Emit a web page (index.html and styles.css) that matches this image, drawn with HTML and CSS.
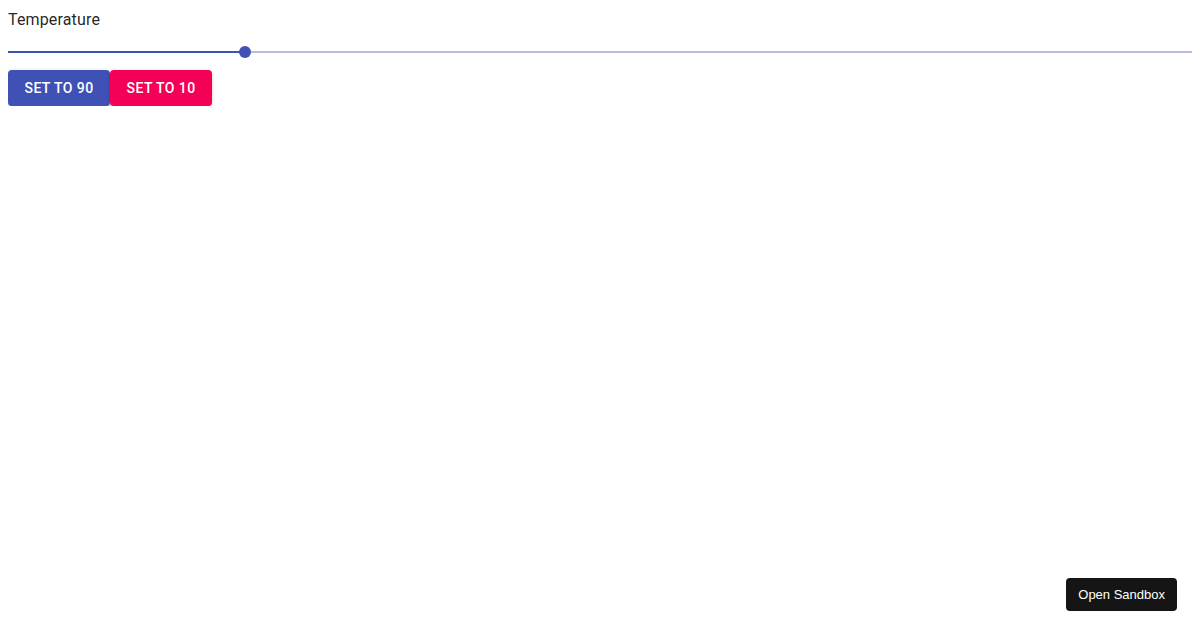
FILE: index.html
```html
<!DOCTYPE html>
<html lang="en">
<head>
    <meta charset="UTF-8">
    <meta name="viewport" content="width=device-width, initial-scale=1.0">
    <title>Slider</title>
    <link rel="stylesheet" href="styles.css">
</head>
<body>
    <p class="label">Temperature</p>
    <div class="slider">
        <span class="rail"></span>
        <span class="track" style="width: 20%"></span>
        <span class="thumb" style="left: 20%"></span>
    </div>
    <div class="actions">
        <button class="btn primary">Set to 90</button>
        <button class="btn secondary">Set to 10</button>
    </div>
    <a class="sandbox" href="#">Open Sandbox</a>
</body>
</html>
```

FILE: styles.css
```css
body {
    margin: 8px;
    font-family: Roboto, "Liberation Sans", sans-serif;
    color: rgba(0, 0, 0, 0.87);
    background: #fff;
}
.label {
    margin: 0 0 0.35em;
    font-size: 16px;
    line-height: 1.5;
    letter-spacing: 0.00938em;
}
.slider {
    position: relative;
    height: 2px;
    padding: 13px 0;
}
.rail {
    display: block;
    height: 2px;
    width: 100%;
    background: #3f51b5;
    opacity: 0.38;
}
.track {
    position: absolute;
    top: 13px;
    left: 0;
    height: 2px;
    background: #3f51b5;
}
.thumb {
    position: absolute;
    top: 13px;
    width: 12px;
    height: 12px;
    margin-left: -6px;
    margin-top: -5px;
    border-radius: 50%;
    background: #3f51b5;
}
.actions {
    display: flex;
    margin-top: 4px;
}
.btn {
    padding: 6px 16.5px;
    min-width: 64px;
    border: none;
    border-radius: 4px;
    font-family: Roboto, "Liberation Sans", sans-serif;
    font-size: 14px;
    font-weight: 500;
    line-height: 1.75;
    letter-spacing: 0.03em;
    text-transform: uppercase;
    color: #fff;
    cursor: pointer;
    box-shadow: 0px 3px 1px -2px rgba(0,0,0,0.2), 0px 2px 2px 0px rgba(0,0,0,0.14), 0px 1px 5px 0px rgba(0,0,0,0.12);
}
.primary {
    background: #3f51b5;
}
.secondary {
    background: #f50057;
}
.sandbox {
    position: fixed;
    right: 23px;
    bottom: 19px;
    padding: 0 12px;
    height: 33px;
    line-height: 33px;
    border-radius: 4px;
    background: #151515;
    color: #fff;
    font-family: "Liberation Sans", Arial, sans-serif;
    font-size: 13px;
    text-decoration: none;
}
```
